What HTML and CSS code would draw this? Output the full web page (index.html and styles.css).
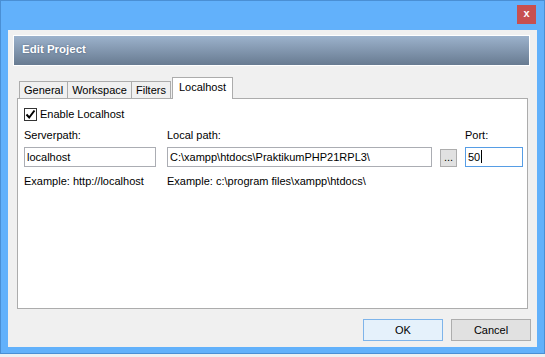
FILE: index.html
```html
<!DOCTYPE html>
<html lang="en">
<head>
  <meta charset="UTF-8">
  <title>Edit Project</title>
  <link rel="stylesheet" href="styles.css">
</head>
<body>
  <div class="window">
    <div class="titlebar">
      <div class="close">x</div>
    </div>

    <div class="client">
      <div class="banner">Edit Project</div>

      <div class="tabs">
        <div class="tab">General</div>
        <div class="tab">Workspace</div>
        <div class="tab">Filters</div>
        <div class="tab active">Localhost</div>
      </div>

      <div class="panel">
        <label class="check">
          <span class="box">
            <svg width="11" height="11" viewBox="0 0 11 11"><path d="M1.5 5.5 L4.2 8.5 L9.5 1.5" fill="none" stroke="#000" stroke-width="2"/></svg>
          </span>
          Enable Localhost
        </label>

        <div class="grid">
          <div class="label">Serverpath:</div>
          <div class="label">Local path:</div>
          <div class="label">Port:</div>

          <div class="field server">localhost</div>
          <div class="pathrow">
            <div class="field path">C:\xampp\htdocs\PraktikumPHP21RPL3\</div>
            <div class="dots">...</div>
          </div>
          <div class="field port">50<span class="caret"></span></div>

          <div class="hint">Example: http://localhost</div>
          <div class="hint">Example: c:\program files\xampp\htdocs\</div>
          <div class="hint"></div>
        </div>
      </div>

      <div class="buttons">
        <div class="btn ok">OK</div>
        <div class="btn">Cancel</div>
      </div>
    </div>
  </div>
</body>
</html>
```

FILE: styles.css
```css
body {
  margin: 0;
  background: #eef0f2;
  font-family: 'Liberation Sans', Arial, sans-serif;
  font-size: 11px;
  color: #000;
}

.window {
  width: 545px;
  height: 354px;
  box-sizing: border-box;
  background: #62b1fb;
  border: 1px solid #4a8fd4;
  padding: 0 7px 6px 7px;
  display: flex;
  flex-direction: column;
}

.titlebar {
  height: 29px;
  display: flex;
  justify-content: flex-end;
  align-items: flex-start;
}

.close {
  width: 19px;
  height: 19px;
  margin-top: 4px;
  margin-right: 1px;
  background: #c75050;
  color: #fff;
  font-weight: bold;
  font-size: 11px;
  line-height: 17px;
  text-align: center;
}

.client {
  flex: 1;
  background: #f0f0f0;
  padding: 5px 7px 0 5px;
  display: flex;
  flex-direction: column;
}

.banner {
  height: 29px;
  border: 1px solid #fff;
  background: linear-gradient(#9cb2cc, #687b91);
  color: #fff;
  font-weight: bold;
  font-size: 11.5px;
  line-height: 27px;
  padding-left: 8px;
  text-shadow: 0 0 2px rgba(40,60,90,0.6);
}

/* tabs */
.tabs {
  display: flex;
  align-items: flex-end;
  margin: 11px 0 0 6px;
  height: 21px;
  position: relative;
  z-index: 1;
}

.tab {
  height: 16px;
  line-height: 16px;
  padding: 0 4px;
  border: 1px solid #acacac;
  border-bottom: none;
  background: #f0f0f0;
  margin-right: -1px;
}

.tab.active {
  height: 21px;
  line-height: 18px;
  padding: 0 6px;
  background: #fff;
  margin-left: 2px;
  margin-bottom: -1px;
}

.panel {
  margin: 0 2px 0 4px;
  height: 211px;
  box-sizing: border-box;
  background: #fff;
  border: 1px solid #acacac;
  padding: 9px 6px 0 6px;
}

.check {
  display: flex;
  align-items: center;
  gap: 3px;
  height: 13px;
  line-height: 13px;
}

.box {
  width: 11px;
  height: 11px;
  border: 1px solid #333;
  display: flex;
  align-items: center;
  justify-content: center;
}

.grid {
  display: grid;
  grid-template-columns: 143px 298px 58px;
  margin-top: 8px;
}

.label {
  line-height: 13px;
  margin-bottom: 5px;
}

.field {
  height: 18px;
  line-height: 18px;
  border: 1px solid #abadb3;
  padding-left: 2px;
  white-space: nowrap;
  overflow: hidden;
}

.server { width: 128px; }

.pathrow {
  display: flex;
  align-items: flex-end;
  gap: 8px;
}

.path { width: 261px; }

.dots {
  width: 15px;
  height: 16px;
  border: 1px solid #adadad;
  background: #e1e1e1;
  text-align: center;
  line-height: 14px;
}

.port {
  border-color: #569de5;
}

.caret {
  display: inline-block;
  width: 1px;
  height: 13px;
  background: #000;
  vertical-align: -2px;
  margin-left: 1px;
}

.hint {
  margin-top: 8px;
  line-height: 13px;
}

.buttons {
  display: flex;
  justify-content: flex-end;
  gap: 8px;
  margin: 10px -1px 0 0;
}

.btn {
  width: 78px;
  height: 20px;
  line-height: 20px;
  text-align: center;
  border: 1px solid #adadad;
  background: #e1e1e1;
}

.btn.ok {
  border-color: #7eb4ea;
  background: #e5f1fb;
}
```
